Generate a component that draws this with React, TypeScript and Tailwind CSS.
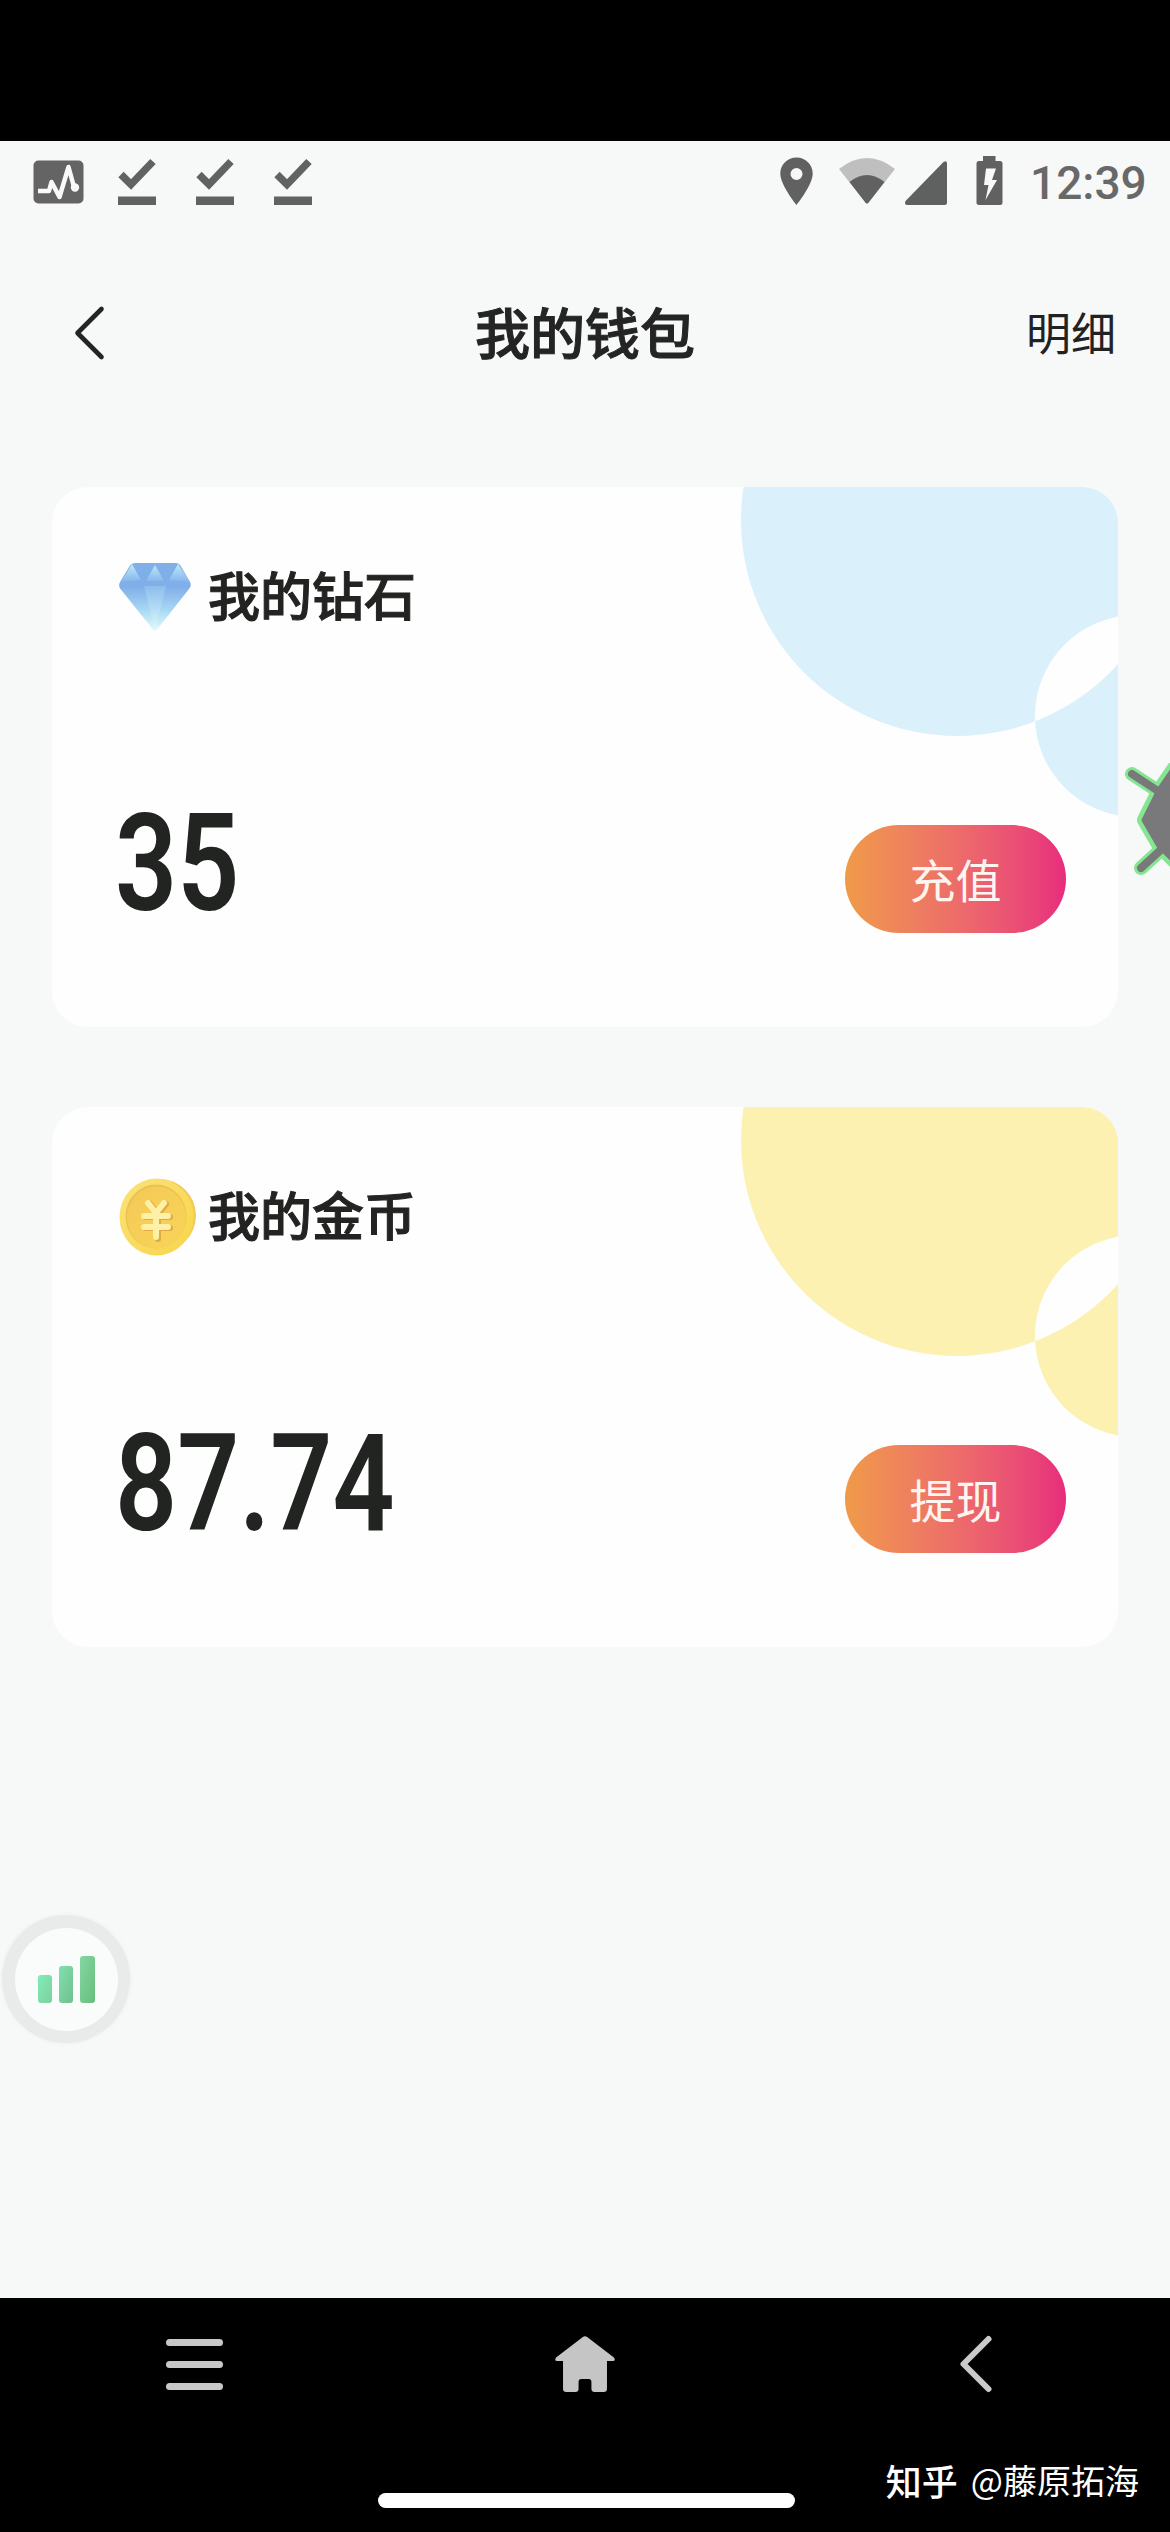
import type { ReactNode } from "react";

type Wallet = {
  id: string;
  title: string;
  icon: ReactNode;
  amount: string;
  action: string;
  bubble: string;
};

const TaskDoneIcon = () => (
  <svg viewBox="0 0 38 48" className="h-[48px] w-[38px]">
    <path d="M3 16.5 L13 26.5 L35 3.5" fill="none" stroke="#616363" strokeWidth="7.5" />
    <rect x="0" y="38.5" width="38" height="8.5" fill="#616363" />
  </svg>
);

const ActivityIcon = () => (
  <svg viewBox="0 0 52 44" className="h-[44px] w-[52px]">
    <rect x="0.5" y="0.5" width="50" height="43" rx="5" fill="#646464" />
    <path
      d="M5 31 H16 L18.5 22 L26.5 37 L35.5 7 L41 27"
      fill="none"
      stroke="#f9f9f9"
      strokeWidth="4.5"
      strokeLinejoin="round"
    />
    <circle cx="42" cy="27.5" r="4.2" fill="#f9f9f9" />
  </svg>
);

const StatusBar = () => (
  <div className="flex h-[79px] items-start justify-between pt-[15px] pr-[27px] pl-[33px]">
    <div className="flex items-start">
      <div className="mt-[4px] mr-[33px]">
        <ActivityIcon />
      </div>
      <div className="mt-[2px] flex gap-[40px]">
        <TaskDoneIcon />
        <TaskDoneIcon />
        <TaskDoneIcon />
      </div>
    </div>
    <div className="flex items-start">
      <svg viewBox="0 0 33 50" className="mr-[26px] h-[50px] w-[33px]">
        <path
          d="M16.5 1.5 C7.5 1.5 0.3 8.5 0.3 17.5 C0.3 29 16.5 49 16.5 49 S32.7 29 32.7 17.5 C32.7 8.5 25.5 1.5 16.5 1.5 Z M16.5 12 a6 6 0 1 1 0 12 a6 6 0 1 1 0 -12 Z"
          fill="#616161"
          fillRule="evenodd"
        />
      </svg>
      <svg viewBox="0 0 56 50" className="mr-[10px] h-[50px] w-[56px]">
        <path d="M0 13 Q28 -9 56 13 L30 46 Q28 49 26 46 Z" fill="#bfbfbf" />
        <path d="M10.5 26 Q28 12 45.5 26 L30 46 Q28 49 26 46 Z" fill="#616161" />
      </svg>
      <svg viewBox="0 0 42 50" className="mr-[29px] h-[50px] w-[42px]">
        <path d="M42 7 V46.5 Q42 49 39.5 49 H2 Q-1.5 48 1 44.5 L38.5 6 Q41.5 4 42 7 Z" fill="#5f6161" />
      </svg>
      <svg viewBox="0 0 27 50" className="mr-[27px] h-[50px] w-[27px]">
        <path
          d="M7 0 H19.5 V5 H24 Q26.5 5 26.5 7.5 V46.5 Q26.5 49 24 49 H3 Q0.5 49 0.5 46.5 V7.5 Q0.5 5 3 5 H7 Z"
          fill="#616161"
        />
        <path d="M10 12.5 H20 L16 24 H21 L9.5 44 L12.5 29 H8 Z" fill="#f9f9f9" />
      </svg>
      <span className="w-[113px] text-[46px] leading-[54px] font-medium whitespace-nowrap text-[#686868] [font-family:Roboto,sans-serif]">
        12:39
      </span>
    </div>
  </div>
);

const Header = () => (
  <header className="grid h-[226px] grid-cols-[1fr_auto_1fr] items-center px-[54px]">
    <svg viewBox="0 0 32 56" className="ml-[19px] h-[56px] w-[32px]">
      <path
        d="M28.5 4 L4.5 28 L28.5 52"
        fill="none"
        stroke="#242424"
        strokeWidth="4.6"
        strokeLinecap="round"
        strokeLinejoin="round"
      />
    </svg>
    <h1 className="mb-[6px] text-[55px] leading-[70px] font-medium text-[#242424] [-webkit-text-stroke:1px_#242424]">
      我的钱包
    </h1>
    <span className="mb-[2px] text-right text-[45px] leading-[70px] text-[#222]">明细</span>
  </header>
);

const DiamondIcon = () => (
  <svg viewBox="0 0 72 70" className="h-[70px] w-[72px]">
    <defs>
      <linearGradient id="gem" x1="0" y1="0" x2="0" y2="1">
        <stop offset="0" stopColor="#7fb0e6" />
        <stop offset="0.35" stopColor="#80aee9" />
        <stop offset="0.7" stopColor="#a9d8f4" />
        <stop offset="1" stopColor="#e2fbfb" />
      </linearGradient>
      <linearGradient id="facet" x1="0" y1="0" x2="0" y2="1">
        <stop offset="0" stopColor="#bfeaf8" />
        <stop offset="1" stopColor="#86b4ec" />
      </linearGradient>
      <linearGradient id="core" x1="0" y1="0" x2="0" y2="1">
        <stop offset="0" stopColor="#94c4f0" />
        <stop offset="1" stopColor="#e0fbfa" />
      </linearGradient>
    </defs>
    <path
      d="M16 1 H57 Q60 1 61.5 3.5 L71 20 Q73 24 70 27 L38.5 67 Q36 70 33.5 67 L1.5 27 Q-1 24 1 20 L11 3.5 Q12.5 1 16 1 Z"
      fill="url(#gem)"
    />
    <path d="M13 2 L22 18 L2 20 Z M59 2 L71 20 L50 18 Z M36 3 L45 19 H27 Z" fill="url(#facet)" />
    <path d="M25 24 H47 L36 69 Z" fill="url(#core)" opacity="0.7" />
  </svg>
);

const CoinIcon = () => (
  <svg viewBox="0 0 78 79" className="h-[79px] w-[78px]">
    <defs>
      <linearGradient id="rim" x1="0" y1="0" x2="1" y2="1">
        <stop offset="0" stopColor="#fbe27a" />
        <stop offset="1" stopColor="#f8d548" />
      </linearGradient>
      <linearGradient id="face" x1="0" y1="0" x2="1" y2="1">
        <stop offset="0" stopColor="#f3c957" />
        <stop offset="1" stopColor="#f9d458" />
      </linearGradient>
    </defs>
    <circle cx="40.5" cy="38.5" r="36.5" fill="#f2cc58" />
    <ellipse cx="37.5" cy="40" rx="37" ry="38.5" fill="url(#rim)" />
    <ellipse cx="37" cy="39.5" rx="30.5" ry="32" fill="#ecc24e" />
    <ellipse cx="37.5" cy="40.5" rx="29.5" ry="31" fill="url(#face)" />
    <g fill="none" strokeWidth="6" strokeLinecap="round" strokeLinejoin="round">
      <path d="M31 27 L39 37 L47 27 M27 40 H51 M27 51 H51 M39 38 V62" stroke="#dfa945" />
      <path d="M29 26 L37 36 L45 26 M25 39 H49 M25 50 H49 M37 37 V60" stroke="#fff0a8" />
    </g>
  </svg>
);

const WALLETS: Wallet[] = [
  {
    id: "diamond",
    title: "我的钻石",
    icon: <DiamondIcon />,
    amount: "35",
    action: "充值",
    bubble: "fill-[#daf0fb]",
  },
  {
    id: "coin",
    title: "我的金币",
    icon: <CoinIcon />,
    amount: "87.74",
    action: "提现",
    bubble: "fill-[#fcf1b1]",
  },
];

const WalletCard = ({ wallet }: { wallet: Wallet }) => (
  <section className="relative flex h-[540px] flex-col justify-between overflow-hidden rounded-[36px] bg-[#fdfefd] pt-[70px] pr-[52px] pb-[94px] pl-[63px]">
    {/* overlapping bubbles, the shared part stays white */}
    <svg viewBox="0 0 378 330" className="absolute top-0 right-0 h-[330px] w-[378px]">
      <path
        className={wallet.bubble}
        fillRule="evenodd"
        d="M217 -183 a216 216 0 1 1 0 432 a216 216 0 1 1 0 -432 Z M396 128 a101 101 0 1 1 0 202 a101 101 0 1 1 0 -202 Z"
      />
    </svg>
    <div className="flex h-[79px] items-center">
      <div className="flex w-[93px] items-center pl-[4px]">{wallet.icon}</div>
      <h2 className="mb-[6px] text-[52px] leading-[73px] font-medium text-[#232422] [-webkit-text-stroke:1px_#232422]">
        {wallet.title}
      </h2>
    </div>
    <div className="flex items-end justify-between">
      <span className="mb-[11px] origin-left scale-x-[0.8] text-[136px] leading-[116px] font-semibold text-[#222421] [font-family:Roboto,sans-serif]">
        {wallet.amount}
      </span>
      <button className="relative h-[108px] w-[221px] rounded-full bg-linear-to-r from-[#f09a48] to-[#e72c7c] pb-[2px] text-[46px] text-[#fff5f0]">
        {wallet.action}
      </button>
    </div>
  </section>
);

const BeetleSticker = () => (
  <svg viewBox="0 0 46 116" className="absolute top-[763px] right-0 h-[116px] w-[46px]">
    <g strokeLinecap="round" strokeLinejoin="round">
      <path
        d="M8 11 L34 28 M17 105 L40 84 M50 5 L35 27 L20 57 L35 83 L50 98 Z"
        fill="#84e691"
        stroke="#84e691"
        strokeWidth="14"
      />
      <path d="M8 11 L34 28 M17 105 L40 84" stroke="#777a79" strokeWidth="8" />
      <path d="M50 5 L35 27 L20 57 L35 83 L50 98 Z" fill="#79797c" stroke="#79797c" strokeWidth="5" />
    </g>
  </svg>
);

const FloatingBall = () => (
  <div className="absolute top-[1915px] left-[2px] flex h-[128px] w-[128px] items-center justify-center rounded-full bg-[#e9eaea] shadow-[0_0_4px_#eeeeee]">
    <div className="flex h-[103px] w-[103px] items-end justify-center gap-[7px] rounded-full bg-[#fafbfb] pb-[28px]">
      <div className="h-[28px] w-[14px] rounded-[3px] bg-linear-to-br from-[#7eedba] to-[#7fcf9b]" />
      <div className="h-[37px] w-[14px] rounded-[3px] bg-linear-to-br from-[#7fe0b0] to-[#72c08b]" />
      <div className="h-[47px] w-[15px] rounded-[3px] bg-linear-to-br from-[#85d6a5] to-[#66be7a]" />
    </div>
  </div>
);

const NavBar = () => (
  <nav className="flex h-[132px] items-center justify-between pr-[177px] pl-[166px]">
    <div className="flex w-[57px] flex-col gap-[15px]">
      <div className="h-[7px] rounded-full bg-[#c8c8c8]" />
      <div className="h-[7px] rounded-full bg-[#c8c8c8]" />
      <div className="h-[7px] rounded-full bg-[#c8c8c8]" />
    </div>
    <svg viewBox="0 0 56 58" preserveAspectRatio="none" className="-ml-[12px] h-[58px] w-[60px]">
      <path
        d="M26 2 Q28 0.5 30 2 L55 22.5 Q57 26 54 26 H48.5 V54 Q48.5 57 45.5 57 H37 Q34 57 34 54 V47 Q34 44 31.5 44 H24.5 Q22 44 22 47 V54 Q22 57 19 57 H10.5 Q7.5 57 7.5 54 V26 H2 Q-1 26 1 22.5 Z"
        fill="#c5c5c5"
      />
    </svg>
    <svg viewBox="0 0 34 60" className="h-[60px] w-[34px]">
      <path
        d="M29.5 5 L4.5 30 L29.5 55"
        fill="none"
        stroke="#cbcacb"
        strokeWidth="6"
        strokeLinecap="round"
        strokeLinejoin="round"
      />
    </svg>
  </nav>
);

export default function App() {
  return (
    <div className="relative flex h-[2532px] w-[1170px] flex-col overflow-hidden bg-black [font-family:'Noto_Sans_CJK_SC',sans-serif]">
      <main className="mt-[141px] h-[2157px] bg-[#f7f8f8]">
        <StatusBar />
        <Header />
        <div className="mt-[41px] flex flex-col gap-[80px] px-[52px]">
          {WALLETS.map((w) => (
            <WalletCard key={w.id} wallet={w} />
          ))}
        </div>
      </main>

      <NavBar />

      <footer className="flex flex-1 justify-end pr-[31px]">
        <div className="mt-[63px] mr-[91px] h-[15px] w-[417px] rounded-full bg-white" />
        <div className="mt-[26px] flex h-[48px] items-center gap-[13px] whitespace-nowrap text-white">
          <span className="text-[36px] leading-[48px] font-medium">知乎</span>
          <span className="text-[34px] leading-[48px]">@藤原拓海</span>
        </div>
      </footer>

      <BeetleSticker />
      <FloatingBall />
    </div>
  );
}
